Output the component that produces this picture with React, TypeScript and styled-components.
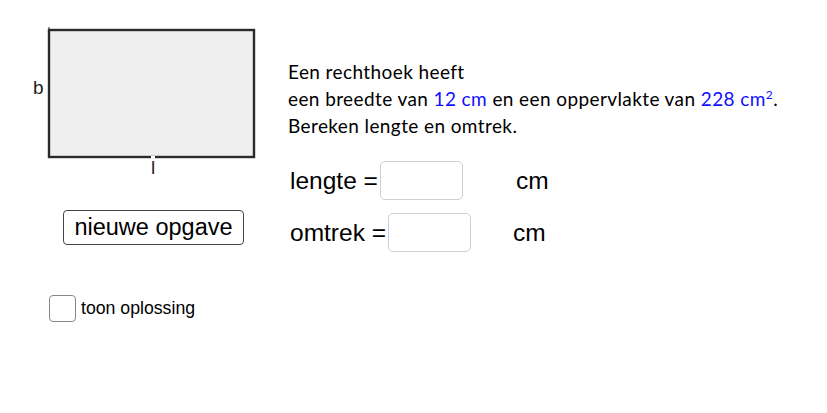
import React from "react";
import styled, { createGlobalStyle } from "styled-components";

const Global = createGlobalStyle`
  html, body { margin: 0; padding: 0; background: #ffffff; }
  body { width: 827px; height: 413px; overflow: hidden; font-family: "Liberation Sans", Arial, sans-serif; color: #000; }
`;

const Page = styled.div`
  display: flex;
  flex-direction: row;
  width: 827px;
  height: 413px;
`;

const LeftColumn = styled.div`
  display: flex;
  flex-direction: column;
  align-items: flex-start;
  width: 288px;
  flex: none;
`;

const Figure = styled.svg`
  display: block;
  width: 270px;
  height: 180px;
`;

const Button = styled.button`
  margin: 30px 0 0 63px;
  width: 181px;
  height: 35px;
  padding: 0;
  box-sizing: border-box;
  border: 1px solid #444;
  border-radius: 4px;
  background: #fff;
  font-family: "Liberation Sans", Arial, sans-serif;
  font-size: 23.5px;
  color: #000;
  line-height: 1;
`;

const CheckRow = styled.label`
  display: flex;
  align-items: center;
  gap: 5px;
  margin: 50px 0 0 49px;
  font-size: 17.7px;
`;

const Box = styled.span`
  display: block;
  width: 27px;
  height: 27px;
  box-sizing: border-box;
  border: 1px solid #888;
  border-radius: 4px;
  background: #fff;
`;

const RightColumn = styled.div`
  display: flex;
  flex-direction: column;
  padding-top: 58px;
`;

const Problem = styled.div`
  font-family: "Lato", sans-serif;
  font-size: 19px;
  letter-spacing: 0.4px;
  line-height: 27px;
  color: #000;
`;

const Line = styled.div`
  white-space: nowrap;
`;

const Blue = styled.span`
  color: #1010ff;
`;

const Sup = styled.sup`
  font-size: 12px;
  line-height: 0;
  vertical-align: 0.55em;
`;

const AnswerRow = styled.div<{ $top: number }>`
  display: flex;
  align-items: center;
  margin-top: ${(p) => p.$top}px;
  padding-left: 2px;
  height: 39px;
  font-family: "Liberation Sans", Arial, sans-serif;
  font-size: 24.5px;
`;

const Label = styled.span`
  white-space: nowrap;
`;

const Field = styled.span`
  display: block;
  width: 83px;
  height: 39px;
  box-sizing: border-box;
  margin-left: 2px;
  border: 1px solid #cfcfcf;
  border-radius: 5px;
  background: #fff;
`;

const Unit = styled.span<{ $gap: number }>`
  margin-left: ${(p) => p.$gap}px;
`;

export default function App() {
  return (
    <>
      <Global />
      <Page>
        <LeftColumn>
          <Figure viewBox="0 0 270 180">
            <rect x="49" y="30" width="205" height="127" fill="#efefef" stroke="#2a2a2a" strokeWidth="2.4" />
            <line x1="49" y1="27" x2="49" y2="30" stroke="#2a2a2a" strokeWidth="1" />
            <rect x="151" y="156" width="4" height="2.6" fill="#ffffff" />
            <text x="33" y="94" fontFamily="Liberation Sans, Arial, sans-serif" fontSize="19" fill="#222">b</text>
            <text x="151" y="174" fontFamily="Liberation Sans, Arial, sans-serif" fontSize="19" fill="#222">l</text>
          </Figure>
          <Button type="button">nieuwe opgave</Button>
          <CheckRow>
            <Box />
            <span>toon oplossing</span>
          </CheckRow>
        </LeftColumn>
        <RightColumn>
          <Problem>
            <Line>Een rechthoek heeft</Line>
            <Line>
              een breedte van <Blue>12 cm</Blue> en een oppervlakte van <Blue>228 cm<Sup>2</Sup></Blue>.
            </Line>
            <Line>Bereken lengte en omtrek.</Line>
          </Problem>
          <AnswerRow $top={22}>
            <Label>lengte =</Label>
            <Field />
            <Unit $gap={53}>cm</Unit>
          </AnswerRow>
          <AnswerRow $top={13}>
            <Label>omtrek =</Label>
            <Field />
            <Unit $gap={42}>cm</Unit>
          </AnswerRow>
        </RightColumn>
      </Page>
    </>
  );
}
